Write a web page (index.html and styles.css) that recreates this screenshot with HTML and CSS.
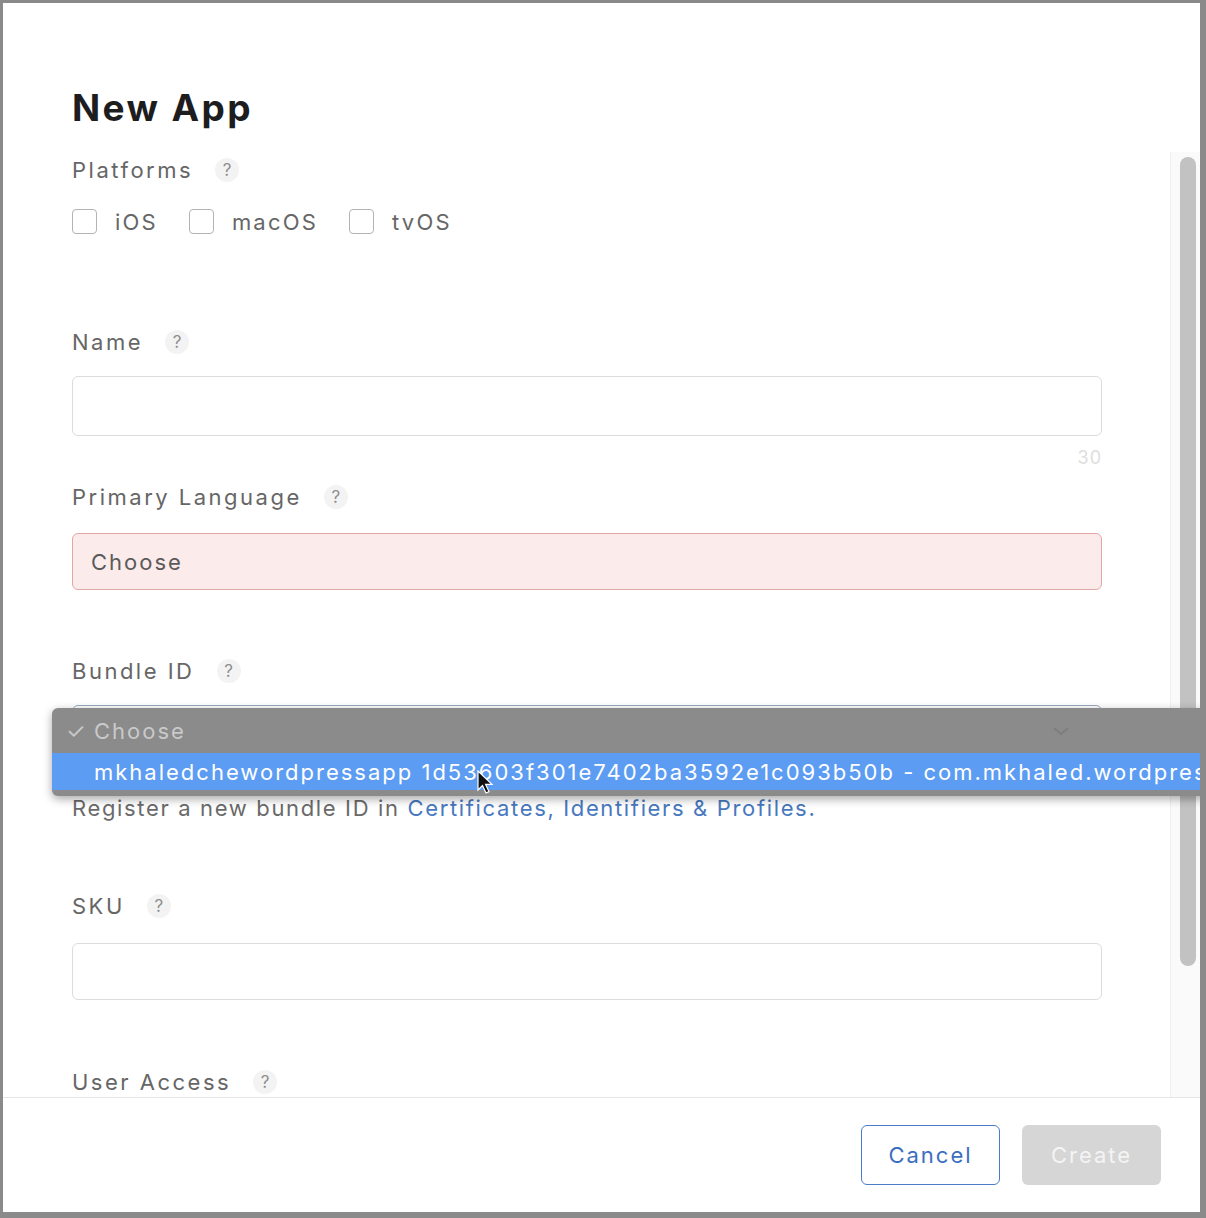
FILE: index.html
```html
<!DOCTYPE html>
<html lang="en">

<head>
    <meta charset="UTF-8">
    <title>New App</title>
    <link rel="stylesheet" href="styles.css">
</head>

<body>
    <div class="modal">
        <div class="scroll">
            <div class="content">
                <h1 class="title">New App</h1>

                <div class="label lbl-platforms">Platforms <span class="help">?</span></div>
                <div class="platforms">
                    <label class="check"><span class="box"></span>iOS</label>
                    <label class="check"><span class="box"></span>macOS</label>
                    <label class="check"><span class="box"></span>tvOS</label>
                </div>

                <div class="label lbl-name">Name <span class="help">?</span></div>
                <div class="field"></div>
                <div class="counter">30</div>

                <div class="label lbl-lang">Primary Language <span class="help">?</span></div>
                <div class="field select error">Choose</div>

                <div class="label lbl-bundle">Bundle ID <span class="help">?</span></div>
                <div class="bundle-wrap">
                    <div class="field select focus"></div>
                    <!-- open select menu -->
                    <div class="menu">
                        <div class="menu-row first">
                            <span class="tick">&#10003;</span>Choose
                            <svg class="chev" width="18" height="12" viewBox="0 0 18 12">
                                <path d="M2 3 L9 9 L16 3" fill="none" stroke="#7d7d7d" stroke-width="2" />
                            </svg>
                        </div>
                        <div class="menu-row active">mkhaledchewordpressapp 1d53603f301e7402ba3592e1c093b50b - com.mkhaled.wordpres</div>
                        <svg class="cursor" width="18" height="26" viewBox="0 0 18 26">
                            <path d="M2 1 L2 20 L6.5 15.5 L10 23 L13 21.6 L9.6 14.4 L16 14.4 Z" fill="#111" stroke="#fff" stroke-width="1.2" />
                        </svg>
                    </div>
                </div>
                <div class="hint">Register a new bundle ID in <a href="#">Certificates, Identifiers &amp; Profiles.</a></div>

                <div class="label lbl-sku">SKU <span class="help">?</span></div>
                <div class="field sku"></div>

                <div class="label lbl-access">User Access <span class="help">?</span></div>
            </div>
            <div class="track">
                <div class="thumb"></div>
            </div>
        </div>
        <div class="footer">
            <button class="btn cancel">Cancel</button>
            <button class="btn create">Create</button>
        </div>
    </div>
</body>

</html>
```

FILE: styles.css
```css
* {
    margin: 0;
    padding: 0;
    box-sizing: border-box;
}

body {
    background: #8a8a8a;
    font-family: Inter, "Liberation Sans", Arial, sans-serif;
    overflow: hidden;
    height: 1218px;
}

.modal {
    margin: 3px 6px 0 3px;
    height: 1209px;
    background: #fff;
    display: flex;
    flex-direction: column;
}

.scroll {
    height: 1094px;
    display: flex;
    overflow: hidden;
}

.content {
    width: 1167px;
    padding-left: 69px;
    flex-shrink: 0;
}

.title {
    margin-top: 83px;
    font-size: 37px;
    line-height: 44px;
    font-weight: 700;
    letter-spacing: 2.4px;
    color: #1d1d1f;
}

.label {
    font-size: 22px;
    line-height: 28px;
    letter-spacing: 2.5px;
    color: #666;
    display: flex;
    align-items: center;
}

.help {
    display: inline-flex;
    align-items: center;
    justify-content: center;
    width: 24px;
    height: 24px;
    margin-left: 22px;
    border-radius: 50%;
    background: #f3f3f3;
    color: #8d8d8d;
    font-size: 17px;
    letter-spacing: 0;
}

.lbl-platforms { margin-top: 26px; }
.lbl-name { margin-top: 94px; }
.lbl-lang { margin-top: 13px; }
.lbl-bundle { margin-top: 67px; }
.lbl-sku { margin-top: 70px; }
.lbl-access { margin-top: 68px; }

.platforms {
    display: flex;
    gap: 31px;
    margin-top: 25px;
    height: 25px;
}

.check {
    display: flex;
    align-items: center;
    gap: 18px;
    font-size: 22px;
    letter-spacing: 2.2px;
    color: #666;
}

.box {
    width: 25px;
    height: 25px;
    border: 1.5px solid #b3b3b3;
    border-radius: 4px;
    background: #fff;
}

.field {
    width: 1030px;
    height: 57px;
    margin-top: 20px;
    border: 1px solid #dcdcdc;
    border-radius: 6px;
    background: #fff;
}

.lbl-name + .field {
    height: 60px;
}

.sku {
    margin-top: 23px;
}

.select {
    display: flex;
    align-items: center;
    padding-left: 18px;
    font-size: 22px;
    letter-spacing: 2px;
    color: #5a5a5a;
}

.error {
    margin-top: 22px;
    background: #fcebeb;
    border-color: #e3a6a6;
}

.focus {
    border-color: #9aa9c0;
}

.counter {
    width: 1030px;
    margin-top: 10px;
    text-align: right;
    font-size: 18px;
    line-height: 24px;
    letter-spacing: 1px;
    color: #dedede;
}

.bundle-wrap {
    position: relative;
}

.menu {
    position: absolute;
    left: -20px;
    top: 3px;
    width: 1200px;
    height: 88px;
    background: #8b8b8b;
    border-radius: 6px;
    box-shadow: 0 3px 10px rgba(0, 0, 0, 0.35);
    overflow: hidden;
}

.menu-row {
    height: 45px;
    display: flex;
    align-items: center;
    font-size: 22px;
    letter-spacing: 2px;
    white-space: nowrap;
    color: #c9c9c9;
}

.menu-row.first {
    padding-left: 14px;
}

.tick {
    width: 28px;
    letter-spacing: 0;
}

.chev {
    margin-left: 866px;
}

.menu-row.active {
    height: 37px;
    padding-left: 42px;
    background: #5c9cf2;
    color: #fff;
}

.cursor {
    position: absolute;
    left: 424px;
    top: 62px;
}

.hint {
    margin-top: 32px;
    font-size: 22px;
    line-height: 28px;
    letter-spacing: 1.65px;
    color: #6a6a6a;
}

.hint a {
    color: #4878bf;
    text-decoration: none;
}

.track {
    margin-top: 149px;
    flex: 1;
    background: #fafafa;
    border-left: 1px solid #efefef;
    padding: 5px 4px 0 9px;
}

.thumb {
    width: 16px;
    height: 809px;
    border-radius: 8px;
    background: #c2c2c2;
}

.footer {
    flex: 1;
    border-top: 1px solid #e6e6e6;
    display: flex;
    align-items: center;
    justify-content: flex-end;
    gap: 22px;
    padding-right: 39px;
}

.btn {
    width: 139px;
    height: 60px;
    border-radius: 6px;
    font-family: Inter, "Liberation Sans", Arial, sans-serif;
    font-size: 22px;
    letter-spacing: 2px;
    cursor: pointer;
}

.cancel {
    background: #fff;
    border: 1.5px solid #4a7cc9;
    color: #3b6ec1;
}

.create {
    background: #d6d6d6;
    border: none;
    color: #f4f4f4;
}
```
